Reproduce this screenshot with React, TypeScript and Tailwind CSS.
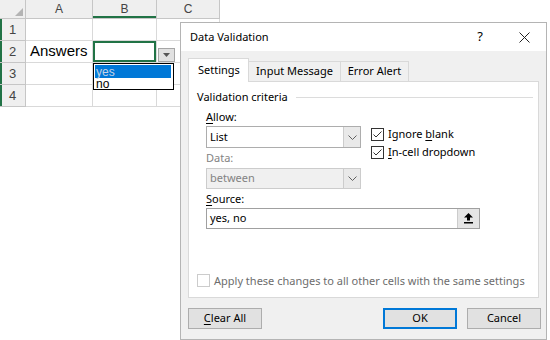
import React from 'react';

const ui = "font-['Noto_Sans','Open_Sans',sans-serif]";
const xl = "font-['Liberation_Sans',Arial,sans-serif]";

function Check({ checked = false, disabled = false }: { checked?: boolean; disabled?: boolean }) {
  return (
    <span
      className={`w-[13px] h-[13px] shrink-0 border bg-white flex items-center justify-center ${
        disabled ? 'border-[#cccccc]' : 'border-[#333333]'
      }`}
    >
      {checked && (
        <svg width="11" height="11" viewBox="0 0 11 11">
          <path d="M1.5 5.5 L4 8 L9.5 2.5" stroke="#333333" strokeWidth="1" fill="none" />
        </svg>
      )}
    </span>
  );
}

function Combo({ value, disabled = false }: { value: string; disabled?: boolean }) {
  return (
    <div
      className={`flex w-[155px] border ${
        disabled
          ? 'h-[21px] border-[#cccccc] bg-[#f0f0f0] text-[#838383]'
          : 'h-[22px] border-[#adadad] bg-white text-black'
      }`}
    >
      <div className="flex-1 pl-[3px] flex items-center">{value}</div>
      <div className="w-[17px] border-l border-[#cccccc] bg-[#e9e9e9] flex items-center justify-center">
        <svg width="9" height="5" viewBox="0 0 9 5">
          <path d="M0.5 0.5 L4.5 4.5 L8.5 0.5" stroke="#606060" strokeWidth="1" fill="none" />
        </svg>
      </div>
    </div>
  );
}

function Sheet() {
  const head = 'border-r border-b border-[#c6c6c6] bg-[#efefef] flex items-center justify-center text-[12px] text-[#444444]';
  const rowHead = `${head} text-[13px] shadow-[inset_2px_0_0_#217346]`;
  const cell = 'border-r border-b border-[#d9d9d9] bg-white';
  return (
    <div className={`grid grid-cols-[26px_67px_64px_63px] grid-rows-[19px_repeat(4,22px)] w-[220px] ${xl}`}>
      {/* corner */}
      <div className={`${head} items-end justify-end pr-[2px] pb-[2px]`}>
        <svg width="8" height="8" viewBox="0 0 8 8">
          <path d="M8 0 L8 8 L0 8 Z" fill="#b4b4b4" />
        </svg>
      </div>
      <div className={head}>A</div>
      <div className={`${head} bg-[#d2d2d2] text-[#217346] shadow-[inset_0_-2px_0_#217346]`}>B</div>
      <div className={head}>C</div>

      <div className={rowHead}>1</div>
      <div className={cell} />
      <div className={cell} />
      <div className={cell} />

      <div className={`${rowHead} bg-[#d2d2d2] text-[#217346] shadow-[inset_2px_0_0_#217346,inset_-2px_0_0_#217346]`}>2</div>
      <div className={`${cell} flex items-center pl-[4px] text-[15px] text-black`}>Answers</div>
      <div className={`${cell} shadow-[inset_0_0_0_2px_#217346]`} />
      <div className={`${cell} pt-[7px] pl-px`}>
        <div className="w-[17px] h-[14px] bg-[#e1e1e1] border border-[#a6a6a6] flex items-center justify-center">
          <svg width="7" height="4" viewBox="0 0 7 4">
            <path d="M0 0 L7 0 L3.5 4 Z" fill="#555555" />
          </svg>
        </div>
      </div>

      <div className={rowHead}>3</div>
      <div className={cell} />
      <div className={cell} />
      <div className={cell} />

      <div className={rowHead}>4</div>
      <div className={cell} />
      <div className={cell} />
      <div className={cell} />
    </div>
  );
}

export default function App() {
  return (
    <div className="relative w-[550px] h-[340px] bg-white overflow-hidden">
      <Sheet />

      {/* in-cell dropdown list */}
      <div className={`absolute left-[93px] top-[63px] w-[81px] h-[27px] border border-black bg-white p-px text-[12px] leading-[12px] ${xl}`}>
        <div className="h-[13px] mr-[1px] bg-[#0078d7] text-[#c5d2e4] pl-[1px] flex items-center">yes</div>
        <div className="h-[12px] pl-[1px] flex items-center text-black">no</div>
      </div>

      {/* Data Validation dialog */}
      <div
        className={`absolute left-[180px] top-[22px] w-[367px] h-[318px] border border-[#b4b4b4] bg-[#f0f0f0] flex flex-col text-[11px] text-black ${ui}`}
      >
        <div className="h-[28px] bg-white flex items-center pl-[9px] pr-[16px]">
          <span className="flex-1">Data Validation</span>
          <span className="text-[13px] mr-[36px]">?</span>
          <svg width="11" height="11" viewBox="0 0 11 11">
            <path d="M0.5 0.5 L10.5 10.5 M10.5 0.5 L0.5 10.5" stroke="#222222" strokeWidth="1" />
          </svg>
        </div>

        <div className="pl-[7px] pr-[7px] pt-[7px]">
          {/* tabs */}
          <div className="flex items-end h-[23px]">
            <div className="relative z-10 -mb-px h-[24px] w-[61px] bg-white border border-b-0 border-[#d9d9d9] pl-[9px] flex items-center">
              Settings
            </div>
            <div className="h-[20px] w-[92px] border border-l-0 border-b-0 border-[#d9d9d9] flex items-center justify-center">
              Input Message
            </div>
            <div className="h-[20px] w-[68px] border border-l-0 border-b-0 border-[#d9d9d9] flex items-center justify-center">
              Error Alert
            </div>
          </div>

          {/* panel */}
          <div className="h-[217px] bg-white border border-[#d9d9d9] flex flex-col pl-[8px] pr-[5px] pt-[7px]">
            <div className="h-[16px] flex items-center gap-[8px]">
              <span>Validation criteria</span>
              <span className="flex-1 h-px bg-[#dcdcdc]" />
            </div>

            <div className="ml-[9px] mt-[4px] flex gap-[10px]">
              <div className="flex flex-col">
                <div className="h-[16px] leading-[16px]">
                  <span className="underline underline-offset-2">A</span>llow:
                </div>
                <div className="mt-[1px]">
                  <Combo value="List" />
                </div>
                <div className="h-[16px] leading-[16px] mt-[2px] text-[#838383]">Data:</div>
                <div className="mt-[2px]">
                  <Combo value="between" disabled />
                </div>
              </div>
              <div className="flex flex-col pt-[16px]">
                <div className="h-[18px] flex items-center gap-[4px]">
                  <Check checked />
                  <span>
                    Ignore <span className="underline underline-offset-2">b</span>lank
                  </span>
                </div>
                <div className="h-[18px] flex items-center gap-[4px]">
                  <Check checked />
                  <span>
                    <span className="underline underline-offset-2">I</span>n-cell dropdown
                  </span>
                </div>
              </div>
            </div>

            <div className="ml-[9px] mt-[2px] h-[16px] leading-[16px]">
              <span className="underline underline-offset-2">S</span>ource:
            </div>
            <div className="ml-[9px] mt-[1px] w-[274px] h-[21px] border border-[#a0a0a0] bg-white flex">
              <div className="flex-1 pl-[3px] flex items-center">yes, no</div>
              <div className="w-[22px] bg-[#e5e5e5] border-l border-[#cccccc] flex items-center justify-center">
                <svg width="9" height="11" viewBox="0 0 9 11">
                  <path d="M4.5 0 L9 4.5 L6 4.5 L6 7.5 L3 7.5 L3 4.5 L0 4.5 Z" fill="#000000" />
                  <rect x="0" y="9" width="9" height="1.5" fill="#000000" />
                </svg>
              </div>
            </div>

            <div className="mt-auto mb-[8px] flex items-center gap-[4px] text-[#6d6d6d] whitespace-nowrap">
              <Check disabled />
              <span>Apply these changes to all other cells with the same settings</span>
            </div>
          </div>
        </div>

        <div className="mt-[10px] pl-[7px] pr-[5px] flex items-center">
          <button className="w-[74px] h-[21px] bg-[#e1e1e1] border border-[#adadad] flex items-center justify-center">
            <span>
              <span className="underline underline-offset-2">C</span>lear All
            </span>
          </button>
          <div className="flex-1" />
          <button className="w-[74px] h-[21px] bg-[#e1e1e1] border-2 border-[#0078d7] flex items-center justify-center">
            OK
          </button>
          <button className="ml-[10px] w-[74px] h-[21px] bg-[#e1e1e1] border border-[#adadad] flex items-center justify-center">
            Cancel
          </button>
        </div>
      </div>
    </div>
  );
}
